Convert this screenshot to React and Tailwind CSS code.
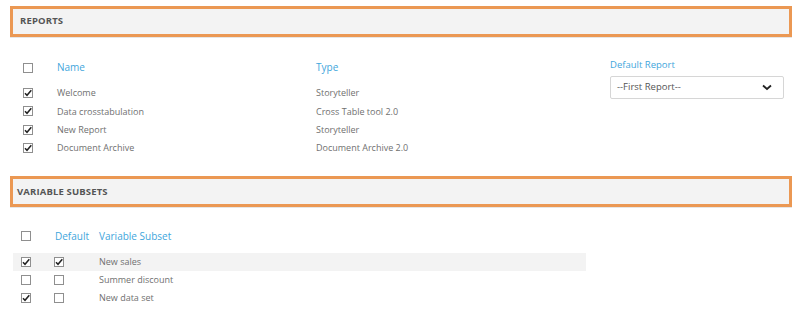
import React from "react";

function Box({ checked, className = "" }) {
  return (
    <svg width="10" height="10" viewBox="0 0 10 10" className={"block " + className}>
      <rect x="0.5" y="0.5" width="9" height="9" fill="#fff" stroke="#8f8f8f" strokeWidth="1" />
      {checked && (
        <path d="M2 5.2 L4 7.3 L8.3 2.2" fill="none" stroke="#222" strokeWidth="1.5" />
      )}
    </svg>
  );
}

function SectionHeader({ title, pad }) {
  return (
    <div className="ml-[10px] w-[782px] h-[31px] border-[3px] border-[#eb9853] bg-[#f3f3f3] flex items-center shadow-[0_1px_0_#e6e6e6]">
      <span className={"text-[9.5px] font-bold text-[#555] tracking-[0.15px] " + pad}>{title}</span>
    </div>
  );
}

const reports = [
  ["Welcome", "Storyteller"],
  ["Data crosstabulation", "Cross Table tool 2.0"],
  ["New Report", "Storyteller"],
  ["Document Archive", "Document Archive 2.0"],
];

const subsets = [
  ["New sales", true, true, true],
  ["Summer discount", false, false, false],
  ["New data set", true, false, false],
];

export default function App() {
  return (
    <div
      className="w-[802px] h-[326px] bg-white overflow-hidden pt-[6px]"
      style={{ fontFamily: '"Open Sans", "Noto Sans", sans-serif' }}
    >
      <SectionHeader title="REPORTS" pad="pl-[7px]" />

      <div className="flex mt-[21px]">
        <div className="w-[600px] pl-[23px]">
          <div className="h-[19px] flex items-center">
            <div className="w-[34px]"><Box /></div>
            <div className="w-[259px] text-[10px] text-[#3fa6dc]">Name</div>
            <div className="text-[10px] text-[#3fa6dc]">Type</div>
          </div>
          <div className="mt-[7px]">
            {reports.map(([n, t]) => (
              <div key={n} className="h-[18.3px] flex items-center">
                <div className="w-[34px]"><Box checked /></div>
                <div className="w-[259px] text-[9px] text-[#707070]">{n}</div>
                <div className="text-[9px] text-[#707070]">{t}</div>
              </div>
            ))}
          </div>
        </div>
        <div className="ml-[10px] w-[174px] mt-[1px]">
          <div className="text-[9.5px] leading-[12px] text-[#3fa6dc]">Default Report</div>
          <div className="mt-[5px] h-[23px] border border-[#d6d6d6] rounded-[2px] flex items-center justify-between pl-[6px] pr-[11px] bg-white">
            <span className="text-[9.5px] text-[#555]">--First Report--</span>
            <svg width="10" height="7" viewBox="0 0 10 7">
              <path d="M1 1.5 L5 5 L9 1.5" fill="none" stroke="#222" strokeWidth="1.8" />
            </svg>
          </div>
        </div>
      </div>

      <div className="mt-[19px]">
        <SectionHeader title="VARIABLE SUBSETS" pad="pl-[4px]" />
      </div>

      <div className="mt-[19px]">
        <div className="h-[20px] flex items-center pl-[21px]">
          <div className="w-[34px]"><Box /></div>
          <div className="w-[44px] text-[10px] text-[#3fa6dc]">Default</div>
          <div className="text-[10px] text-[#3fa6dc]">Variable Subset</div>
        </div>
        <div className="mt-[7px]">
          {subsets.map(([n, a, b, hl]) => (
            <div
              key={n}
              className={"ml-[13px] w-[573px] h-[18px] flex items-center pl-[8px] " + (hl ? "bg-[#f3f3f3]" : "")}
            >
              <div className="w-[33px]"><Box checked={a} /></div>
              <div className="w-[45px]"><Box checked={b} /></div>
              <div className="text-[9px] text-[#707070]">{n}</div>
            </div>
          ))}
        </div>
      </div>
    </div>
  );
}
